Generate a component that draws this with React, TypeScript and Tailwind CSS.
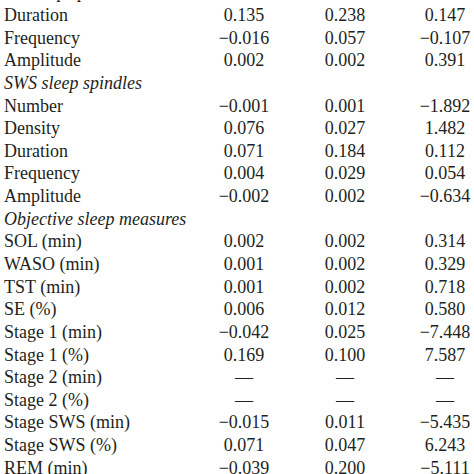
const ROWS: { label: string; head?: boolean; v?: [string, string, string] }[] = [
  { label: 'N2 sleep spindles', head: true },
  { label: 'Duration', v: ['0.135', '0.238', '0.147'] },
  { label: 'Frequency', v: ['−0.016', '0.057', '−0.107'] },
  { label: 'Amplitude', v: ['0.002', '0.002', '0.391'] },
  { label: 'SWS sleep spindles', head: true },
  { label: 'Number', v: ['−0.001', '0.001', '−1.892'] },
  { label: 'Density', v: ['0.076', '0.027', '1.482'] },
  { label: 'Duration', v: ['0.071', '0.184', '0.112'] },
  { label: 'Frequency', v: ['0.004', '0.029', '0.054'] },
  { label: 'Amplitude', v: ['−0.002', '0.002', '−0.634'] },
  { label: 'Objective sleep measures', head: true },
  { label: 'SOL (min)', v: ['0.002', '0.002', '0.314'] },
  { label: 'WASO (min)', v: ['0.001', '0.002', '0.329'] },
  { label: 'TST (min)', v: ['0.001', '0.002', '0.718'] },
  { label: 'SE (%)', v: ['0.006', '0.012', '0.580'] },
  { label: 'Stage 1 (min)', v: ['−0.042', '0.025', '−7.448'] },
  { label: 'Stage 1 (%)', v: ['0.169', '0.100', '7.587'] },
  { label: 'Stage 2 (min)', v: ['—', '—', '—'] },
  { label: 'Stage 2 (%)', v: ['—', '—', '—'] },
  { label: 'Stage SWS (min)', v: ['−0.015', '0.011', '−5.435'] },
  { label: 'Stage SWS (%)', v: ['0.071', '0.047', '6.243'] },
  { label: 'REM (min)', v: ['−0.039', '0.200', '−5.111'] },
]

export default function App() {
  return (
    <div className="w-[474px] h-[474px] overflow-hidden bg-white">
      <div
        className="mt-[-19px] pl-1 text-[18px] text-[#231f20]"
        style={{ fontFamily: '"Liberation Serif", "Times New Roman", serif' }}
      >
        {ROWS.map((r, i) => (
          <div key={i} className="grid grid-cols-[186px_108px_94px_82px] h-[22.65px] items-center leading-none">
            {r.head ? (
              <span className="italic whitespace-nowrap">{r.label}</span>
            ) : (
              <>
                <span className="whitespace-nowrap">{r.label}</span>
                <span className="text-center">{r.v![0]}</span>
                <span className="text-center">{r.v![1]}</span>
                <span className="text-center pl-6">{r.v![2]}</span>
              </>
            )}
          </div>
        ))}
      </div>
    </div>
  )
}
